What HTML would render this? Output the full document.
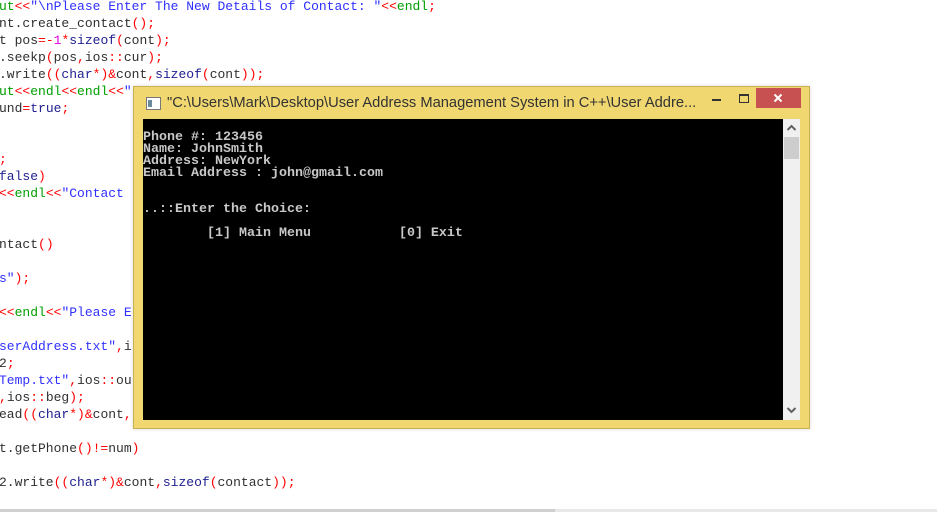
<!DOCTYPE html>
<html><head><style>
body{margin:0;width:937px;height:512px;overflow:hidden;background:#fff;position:relative}
#code{position:absolute;left:-1px;top:-2px;font-family:"Liberation Mono",monospace;font-size:13px;color:#303030}
#code div{height:17px;line-height:17px;white-space:pre;overflow:hidden}
.r{color:#f00}.g{color:#00a000}.s{color:#3030ff}.k{color:#202090}.m{color:#e000e0}
#bar{position:absolute;left:0;top:509px;width:937px;height:3px;background:#e8e8e8}
#bar2{position:absolute;left:0;top:509px;width:555px;height:3px;background:#cfcfcf}
#win{position:absolute;left:133px;top:86px;width:675px;height:341px;background:#f0d770;border:1px solid #c9b050;box-shadow:0 0 4px rgba(0,0,0,.15)}
#title{position:absolute;left:33px;top:8px;font-family:"Liberation Sans",sans-serif;font-size:14.7px;color:#333;white-space:nowrap}
#ico{position:absolute;left:12px;top:10px;width:13px;height:11px;background:#fff;border:1px solid #777}
#ico:before{content:"";position:absolute;left:1px;top:2px;width:4px;height:7px;background:#6a8a9a}
#close{position:absolute;left:622px;top:1px;width:45px;height:20px;background:#c75050}
#min{position:absolute;left:578px;top:12px;width:9px;height:2px;background:#333}
#max{position:absolute;left:605px;top:7px;width:8px;height:6px;border:1px solid #333;border-top-width:2px}
#con{position:absolute;left:9px;top:32px;width:640px;height:301px;background:#000}
#sb{position:absolute;left:649px;top:32px;width:17px;height:301px;background:#f0f0f0}
#thumb{position:absolute;left:1px;top:18px;width:15px;height:22px;background:#cdcdcd}
#txt{position:absolute;left:0;top:13px;margin:0;font-family:"Liberation Mono",monospace;font-size:13.33px;line-height:12px;color:#c8c8c8;font-weight:bold;white-space:pre}
</style></head><body>
<div id="code"><div><span class="g">ut</span><span class="r">&lt;&lt;</span><span class="s">"\nPlease Enter The New Details of Contact: "</span><span class="r">&lt;&lt;</span><span class="g">endl</span><span class="r">;</span></div><div>nt.create_contact<span class="r">();</span></div><div>t pos<span class="r">=-</span><span class="m">1</span><span class="r">*</span><span class="k">sizeof</span><span class="r">(</span>cont<span class="r">);</span></div><div>.seekp<span class="r">(</span>pos<span class="r">,</span>ios<span class="r">::</span>cur<span class="r">);</span></div><div>.write<span class="r">((</span><span class="k">char</span><span class="r">*)&amp;</span>cont<span class="r">,</span><span class="k">sizeof</span><span class="r">(</span>cont<span class="r">));</span></div><div><span class="g">ut</span><span class="r">&lt;&lt;</span><span class="g">endl</span><span class="r">&lt;&lt;</span><span class="g">endl</span><span class="r">&lt;&lt;</span><span class="s">"</span></div><div>und<span class="r">=</span><span class="k">true</span><span class="r">;</span></div><div></div><div></div><div><span class="r">;</span></div><div><span class="k">false</span><span class="r">)</span></div><div><span class="r">&lt;&lt;</span><span class="g">endl</span><span class="r">&lt;&lt;</span><span class="s">"Contact</span></div><div></div><div></div><div>ntact<span class="r">()</span></div><div></div><div><span class="s">s"</span><span class="r">);</span></div><div></div><div><span class="r">&lt;&lt;</span><span class="g">endl</span><span class="r">&lt;&lt;</span><span class="s">"Please E</span></div><div></div><div><span class="s">serAddress.txt"</span><span class="r">,</span>i</div><div>2<span class="r">;</span></div><div><span class="s">Temp.txt"</span><span class="r">,</span>ios<span class="r">::</span>ou</div><div><span class="r">,</span>ios<span class="r">::</span>beg<span class="r">);</span></div><div>ead<span class="r">((</span><span class="k">char</span><span class="r">*)&amp;</span>cont<span class="r">,</span></div><div></div><div>t.getPhone<span class="r">()!=</span>num<span class="r">)</span></div><div></div><div>2.write<span class="r">((</span><span class="k">char</span><span class="r">*)&amp;</span>cont<span class="r">,</span><span class="k">sizeof</span><span class="r">(</span>contact<span class="r">));</span></div></div>
<div id="bar"></div><div id="bar2"></div>
<div id="win">
<div id="ico"></div>
<div id="title">"C:\Users\Mark\Desktop\User Address Management System in C++\User Addre...</div>
<div id="min"></div><div id="max"></div>
<div id="close"><svg width="45" height="20"><path d="M18.5 6.5l7 7M25.5 6.5l-7 7" stroke="#fff" stroke-width="2"/></svg></div>
<div id="con"><pre id="txt">Phone #: 123456
Name: JohnSmith
Address: NewYork
Email Address : john@gmail.com


..::Enter the Choice:

        [1] Main Menu           [0] Exit</pre></div>
<div id="sb"><svg style="position:absolute;left:0;top:0" width="17" height="301"><path d="M4.5 11l4-4 4 4" fill="none" stroke="#606060" stroke-width="2"/><path d="M4.5 289l4 4 4-4" fill="none" stroke="#606060" stroke-width="2"/></svg><div id="thumb"></div></div>
</div>
</body></html>
